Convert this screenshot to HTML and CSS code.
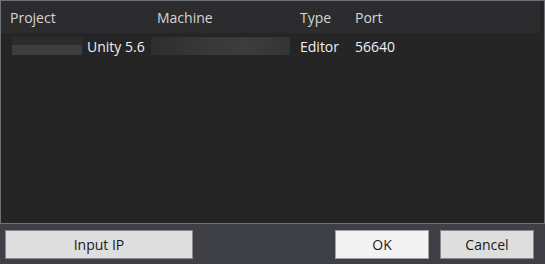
FILE: index.html
```html
<!DOCTYPE html>
<html>
<head>
<meta charset="utf-8">
<link rel="stylesheet" href="styles.css">
</head>
<body>
<div class="dialog">
  <div class="panel">
    <div class="header">
      <div class="col c-project">Project</div>
      <div class="col c-machine">Machine</div>
      <div class="col c-type">Type</div>
      <div class="col c-port">Port</div>
    </div>
    <div class="row">
      <div class="col c-project cell-project">
        <span class="blur blur-a"></span>
        <span class="txt">Unity 5.6</span>
      </div>
      <div class="col c-machine"><span class="blur blur-b"></span></div>
      <div class="col c-type txt">Editor</div>
      <div class="col c-port txt">56640</div>
    </div>
  </div>
  <div class="footer">
    <button class="btn btn-wide">Input IP</button>
    <div class="spacer"></div>
    <button class="btn btn-ok">OK</button>
    <button class="btn">Cancel</button>
  </div>
</div>
</body>
</html>
```
FILE: styles.css
```css
html, body {
  margin: 0;
  padding: 0;
  background: #3f4045;
  font-family: "Open Sans", "Noto Sans", sans-serif;
  font-size: 14px;
}
.dialog {
  width: 545px;
  height: 264px;
  display: flex;
  flex-direction: column;
  box-sizing: border-box;
}
.panel {
  height: 224px;
  box-sizing: border-box;
  border: 1px solid #6f7075;
  background: #252526;
  padding-right: 4px;
}
.header {
  display: flex;
  height: 32px;
  align-items: center;
  background: #2c2c2e;
  color: #d6d6d6;
}
.row {
  display: flex;
  height: 26px;
  align-items: center;
  color: #f0f0f0;
}
.col { box-sizing: border-box; white-space: nowrap; }
.c-project { width: 147px; padding-left: 9px; }
.c-machine { width: 143px; padding-left: 9px; }
.c-type { width: 55px; padding-left: 9px; }
.c-port { width: 100px; padding-left: 9px; }
.row .c-machine { padding-left: 3px; }
.cell-project {
  display: flex;
  align-items: center;
  gap: 5px;
  padding-left: 11px;
}
.blur {
  display: block;
  height: 18px;
  background: linear-gradient(180deg, #2c2c2d 0 45%, #3e3e40 45% 100%);
}
.blur-a { width: 70px; }
.blur-b { width: 139px; background: linear-gradient(90deg, #2e2e30 0, #38383a 40%, #3c3c3e 70%, #343436 100%); }
.footer {
  flex: 1;
  display: flex;
  align-items: center;
  padding: 0 11px 0 5px;
  gap: 11px;
}
.spacer { flex: 1; }
.btn {
  height: 29px;
  width: 94px;
  box-sizing: border-box;
  border: 1px solid #8a8a8c;
  background: #dedede;
  color: #1a1a1a;
  font-family: "Open Sans", "Noto Sans", sans-serif;
  font-size: 14px;
  padding: 0;
  margin: 0;
}
.btn-wide { width: 188px; }
.btn-ok { background: #f3f3f3; border-color: #a0a0a2; }
```
